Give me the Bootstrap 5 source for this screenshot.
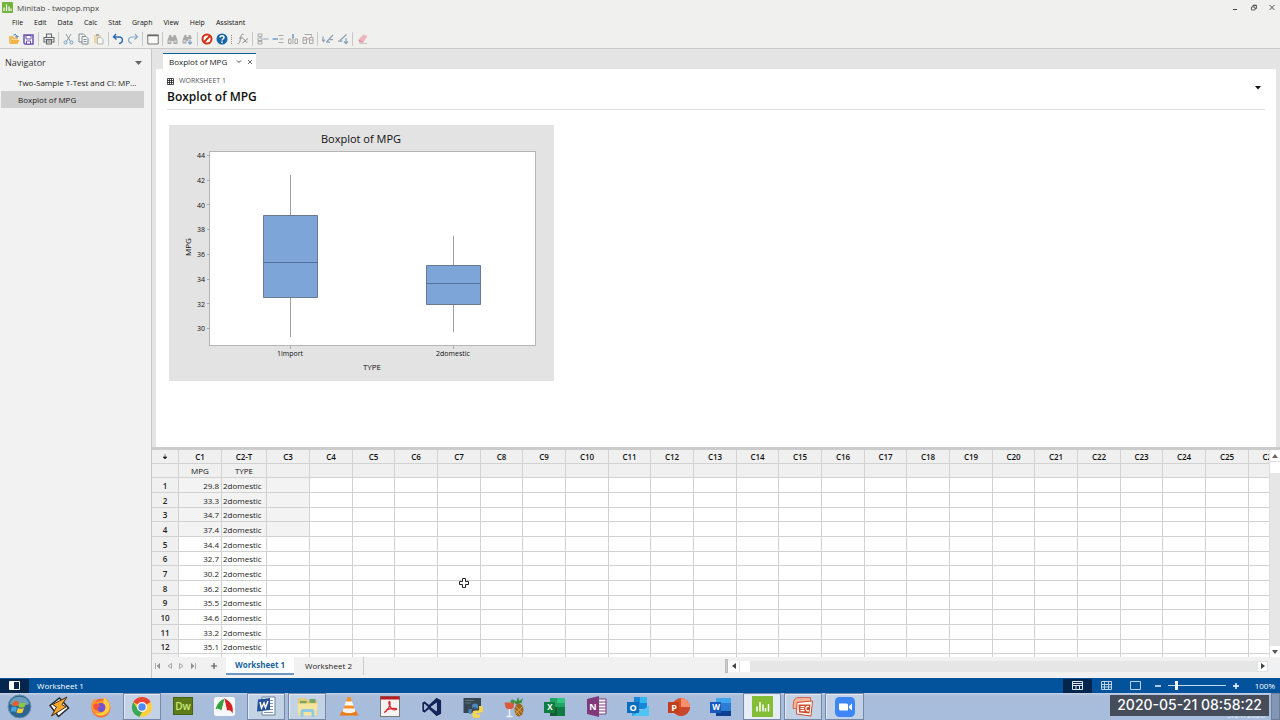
<!DOCTYPE html>
<html lang="en">
<head>
<meta charset="utf-8">
<meta name="viewport" content="width=device-width, initial-scale=1">
<title>Minitab - twopop.mpx</title>
<link href="https://cdn.jsdelivr.net/npm/bootstrap@5.3.0/dist/css/bootstrap.min.css" rel="stylesheet">
<style>
  body { font-family: "Open Sans", "Noto Sans", sans-serif; font-size: 8px; line-height: 12px; color: #1c1c1c; background: #f0f0ef; }
  button { background: none; border: 0; padding: 0; color: inherit; font: inherit; }
  a { color: inherit; text-decoration: none; }
  svg { display: block; }
  .titlebar { height: 15px; padding: 0 5px 0 2px; color: #444; }
  .winbtns { gap: 8px; padding-right: 0; margin-right: -2px; }
  .winbtns button { width: 10px; }
  .menus { height: 15px; padding-left: 12px; gap: 11px; font-size: 7px; color: #111; }
  .tools { height: 19px; padding-left: 6px; border-bottom: 1px solid #c9c9c9; }
  .tools button { width: 15px; display: flex; justify-content: center; }
  .tsep { width: 1px; height: 14px; margin: 0 2px; background: #c8c8c8; }
  .tsep.tight { margin: 0 1px 0 2px; }
  .dots { width: 2px; height: 9px; margin: 0 2px; border-left: 1px dotted #888; }
  .sidenav { width: 152px; background: #f2f2f2; border-right: 1px solid #c6c6c6; }
  .sidenav h2 { font-size: 9px; line-height: 12px; margin: 0; padding: 8px 9px 5px 5px; font-weight: 400; color: #333; }
  .sidenav .item { display: block; height: 17px; line-height: 17px; margin: 0 7px 0 1px; padding-left: 17px; color: #222; white-space: nowrap; }
  .sidenav .item.active { background: #cfcfcf; }
  .tabbar { height: 20px; background: #e4e4e4; padding-left: 11px; }
  .doctab { height: 16px; border-top: 1px solid #0a6398; background: #fff; padding: 0 3px 0 6px; gap: 5px; color: #222; }
  .output { background: #fff; border: solid #e4e4e4; border-width: 0 4px; padding: 6px 11px 0; height: 378px; }
  .output .src { font-size: 7px; gap: 5px; color: #555; }
  .output h1 { font-size: 12px; line-height: 16px; font-weight: 600; margin: 2px 0 0; color: #111; }
  .headrow { border-bottom: 1px solid #dedede; padding-bottom: 4px; }
  .plot { margin: 15px 0 0 2px; }
  .sheet { border-top: 3px solid #cbcbcb; height: 210px; }
  .gridwrap { overflow: hidden; background: #fff; }
  .cells { table-layout: fixed; width: 1121px; border-collapse: separate; border-spacing: 0; color: #222; }
  .cells th, .cells td { padding: 0 2px; border: solid #d2d2d2; border-width: 0 1px 1px 0; height: 15px; line-height: 13px; white-space: nowrap; overflow: hidden; font-weight: 400; }
  .cells thead th { text-align: center; background: #f0f0f0; color: #111; height: 14px; }
  .cells thead tr:first-child th { font-weight: 600; overflow: visible; }
  .cells tbody th { text-align: center; background: #f0f0f0; font-weight: 600; color: #222; }
  .cells tbody tr:nth-child(3n) > * { height: 14px; line-height: 13px; }
  .cells td:nth-child(2) { text-align: right; }
  .cells td:nth-child(3) { padding: 0 0 0 1px; }
  .cells .sel { background: #f3f3f3; }
  .c-row { width: 27px; } .c-a { width: 43px; } .c-b { width: 42px; } .c-text { width: 45px; }
  .vbar { width: 11px; background: #e6e6e6; border-left: 1px solid #ddd; }
  .vbar button, .thumb { background: #fff; width: 10px; height: 11px; display: flex; align-items: center; justify-content: center; }
  .thumb { border-top: 1px solid #ddd; height: 12px; }
  .sheettabs { height: 21px; padding-bottom: 3px; background: #f1f1f1; }
  .steps { gap: 7px; padding: 0 14px 0 3px; }
  .steps button { width: 5px; display: flex; justify-content: center; }
  .wtab { height: 18px; padding: 0 11px; }
  .wtab.active { background: #fff; color: #17639c; font-weight: 700; border-bottom: 2px solid #6d97c6; padding: 0 9px; }
  .wtab:last-child { border-right: 1px solid #ccc; }
  .hbar { width: 555px; height: 14px; padding-right: 12px; }
  .grip { width: 3px; height: 14px; background: #cfcfcf; border: 1px solid #bbb; }
  .track { background: #e6e6e6; height: 11px; }
  .hbar button { width: 11px; height: 11px; background: #fff; display: flex; align-items: center; justify-content: center; }
  .statusbar { height: 15px; background: #02539b; color: #fff; padding-right: 5px; }
  .sqbtn { width: 29px; height: 14px; background: #04264c; display: flex; align-items: center; justify-content: center; }
  .views { margin-right: 5px; }
  .views button { width: 29px; height: 14px; display: flex; align-items: center; justify-content: center; }
  .views button.on { background: #04264c; }
  .zoomer { width: 58px; height: 10px; appearance: none; background: transparent; margin: 0 7px; }
  .zoomer::-webkit-slider-runnable-track { height: 1px; background: #c5d9ec; }
  .zoomer::-webkit-slider-thumb { appearance: none; width: 3px; height: 9px; margin-top: -4px; background: #fff; }
  .taskbar { height: 27px; background: linear-gradient(#c3d1e6, #a9bddb 10%, #a8bddc); }
  .taskbar .app { width: 41px; padding: 0 2px 0 1px; height: 27px; display: flex; }
  .taskbar .app:nth-child(3n) { width: 42px; }
  .taskbar .app:first-child { width: 39px; }
  .taskbar .app span { flex: 1; height: 27px; display: flex; align-items: center; justify-content: center; border: 1px solid transparent; }
  .taskbar .open span { background: #c4d2e6; border-color: #7488a8; box-shadow: inset 1px 1px 0 #e0e9f4; }
  .taskbar .front span { background: #e6edf5; }
  .traydate { right: 15px; bottom: -1px; color: #e6edf6; }
  .stamp { right: 11px; top: 2px; height: 21px; padding: 0 7px; background: #3d4450ec; color: #fff; font: 500 14px/20px Inter, sans-serif; white-space: nowrap; }
  .showdesk { width: 9px; height: 27px; right: 0; top: 0; border: 1px solid #6f7f99; background: #8296b6; }
  .pointer { left: 458px; top: 577px; pointer-events: none; }
</style>
</head>
<body class="vh-100 overflow-hidden">
<div class="d-flex flex-column h-100">
  <header>
    <div class="titlebar d-flex align-items-center">
      <svg width="11" height="11" viewBox="0 0 22 22"><rect width="22" height="22" rx="2" fill="#72b33c"/><path d="M4 18v-7M9 18V5M14 18V9M18 18v-5" stroke="#fff" stroke-width="2.4"/></svg>
      <span class="ms-1">Minitab - twopop.mpx</span>
      <div class="winbtns d-flex ms-auto">
        <button aria-label="Minimize"><svg width="10" height="9" viewBox="0 0 10 9"><path d="M2 6.5h4" stroke="#444"/></svg></button>
        <button aria-label="Restore"><svg width="10" height="9" viewBox="0 0 10 9" fill="none" stroke="#444" stroke-width=".8"><path d="M2.500 4h3.500v3H2.500zM4 4V2.200h3.500V5.500H6M4 2.500h3.500"/></svg></button>
        <button aria-label="Close"><svg width="10" height="9" viewBox="0 0 10 9"><path d="M2.500 2l5 5M7.500 2l-5 5" stroke="#444" stroke-width=".9"/></svg></button>
      </div>
    </div>
    <nav class="menus d-flex align-items-center" aria-label="Menu">
      <a href="#">File</a><a href="#">Edit</a><a href="#">Data</a><a href="#">Calc</a><a href="#">Stat</a><a href="#">Graph</a><a href="#">View</a><a href="#">Help</a><a href="#">Assistant</a>
    </nav>
    <div class="tools d-flex align-items-center" role="toolbar">
      <button aria-label="Open"><svg width="12" height="12" viewBox="0 0 24 24"><path d="M2 21V6h8l2 3h8v4H7z" fill="#efbd5d"/><path d="M6 14h17l-4 8H3z" fill="#f2b447"/><path d="M11 4c4-2 7 0 7 4m-3-2 3 3 3-3" fill="none" stroke="#3474a8" stroke-width="2"/></svg></button>
      <button aria-label="Save"><svg width="11" height="11" viewBox="0 0 22 22"><path d="M2 2h18v18H4l-2-2z" fill="#fff" stroke="#6a4fae" stroke-width="3"/><path d="M6 3h10v7H6zM7 14h8v6H7z" fill="#fff" stroke="#6a4fae" stroke-width="2"/></svg></button>
      <i class="tsep"></i>
      <button aria-label="Print"><svg width="12" height="12" viewBox="0 0 24 24" fill="none" stroke="#63686c" stroke-width="2.200"><path d="M7 9V2h10v7M6 18H2V9h20v9h-4M7 14h10v8H7zM5 13h14M9 18h6"/></svg></button>
      <i class="tsep"></i>
      <button aria-label="Cut"><svg width="11" height="12" viewBox="0 0 22 24" fill="none" stroke-width="2"><path d="M6 2l9 15M16 2L7 17" stroke="#8d979f"/><circle cx="5" cy="19" r="3" stroke="#6c9cc6"/><circle cx="17" cy="19" r="3" stroke="#6c9cc6"/></svg></button>
      <button aria-label="Copy"><svg width="11" height="12" viewBox="0 0 22 24" fill="#f7f7f7" stroke="#7e8990" stroke-width="2"><path d="M2 2h9l3 3v13H2z"/><path d="M8 7h8l4 4v11H8zM11 13h6M11 17h6"/></svg></button>
      <button aria-label="Paste"><svg width="11" height="12" viewBox="0 0 22 24"><path d="M2 4h14v17H2z" fill="#edd6ab"/><path d="M6 2h6v4H6z" fill="#aaa"/><path d="M9 9h7l4 4v9H9z" fill="#f7f7f7" stroke="#b7b7b7" stroke-width="2"/></svg></button>
      <i class="tsep tight"></i>
      <button aria-label="Undo"><svg width="12" height="12" viewBox="0 0 24 24" fill="none" stroke="#2c6cb3" stroke-width="2.800"><path d="M8 2L3 8l6 5M3 8h11c9 0 9 12 0 13"/></svg></button>
      <button aria-label="Redo"><svg width="12" height="12" viewBox="0 0 24 24" fill="none" stroke="#86abc9" stroke-width="2.400"><path d="M16 2l5 6-6 5M21 8H10C1 8 1 20 10 21"/></svg></button>
      <i class="tsep"></i>
      <button aria-label="New window"><svg width="12" height="11" viewBox="0 0 24 22"><path d="M1.500 2h21v18h-21z" fill="#fafafa" stroke="#777" stroke-width="2"/><path d="M1 3h22" stroke="#666" stroke-width="3"/></svg></button>
      <i class="tsep"></i>
      <button aria-label="Find"><svg width="11" height="11" viewBox="0 0 22 22" fill="#a7a9ab"><path d="M5 2h4v4h4V2h4l4 10v8h-8v-6H9v6H1v-8z"/><path d="M3 13h4v4H3zM15 13h4v4h-4z" fill="#d9d9d9"/></svg></button>
      <button aria-label="Find next"><svg width="11" height="11" viewBox="0 0 22 22" fill="#a7a9ab"><path d="M5 2h4v4h4V2h4l3 8h-7v4H9v5H1v-7z"/><path d="M3 12h4v4H3z" fill="#d9d9d9"/><path d="M16 11v9m-4-4 4 4 4-4" fill="none" stroke="#7fa3c7" stroke-width="2.500"/></svg></button>
      <i class="tsep tight"></i>
      <button aria-label="Cancel"><svg width="12" height="12" viewBox="0 0 24 24"><circle cx="12" cy="12" r="9" fill="#fff" stroke="#cf3317" stroke-width="4"/><path d="M18 6L6 18" stroke="#cf3317" stroke-width="4"/></svg></button>
      <button aria-label="Help"><svg width="12" height="12" viewBox="0 0 24 24"><circle cx="12" cy="12" r="11" fill="#1665a8"/><path d="M8 9c0-5 8-5 8 0 0 3-4 3-4 6M12 17v3" fill="none" stroke="#fff" stroke-width="3"/></svg></button>
      <i class="dots"></i>
      <button aria-label="Formula"><svg width="12" height="12" viewBox="0 0 24 24" fill="none" stroke="#8b8b8b" stroke-width="2"><path d="M13 3c-4-2-5 2-6 8s-2 12-6 10M4 10h8M12 12c4-2 4 9 9 6M22 11l-11 9"/></svg></button>
      <i class="tsep"></i>
      <button aria-label="Insert cells"><svg width="12" height="12" viewBox="0 0 24 24" fill="none" stroke="#a9a9a9" stroke-width="2"><path d="M2 2h8v5H2zM2 10h8v5H2zM2 17h8v5H2z"/><path d="M12 12h11" stroke="#8ea8bf"/></svg></button>
      <button aria-label="Insert rows"><svg width="12" height="12" viewBox="0 0 24 24" fill="none" stroke="#a9a9a9" stroke-width="2"><path d="M13 5h10M13 19h10M15 12h8"/><path d="M1 12h11" stroke="#6fa0c9" stroke-width="3"/></svg></button>
      <button aria-label="Insert columns"><svg width="12" height="12" viewBox="0 0 24 24" fill="none" stroke="#a9a9a9" stroke-width="2"><path d="M3 12h5v9H3zM16 12h5v9h-5zM12 11v11"/><path d="M12 2v9" stroke="#7298b8" stroke-width="3"/></svg></button>
      <button aria-label="Move columns"><svg width="12" height="12" viewBox="0 0 24 24" fill="none" stroke="#a9a9a9" stroke-width="2"><path d="M2 9h7v12H2zM15 9h7v12h-7zM2 14h7M15 14h7M5 3h14v4"/><path d="M10 12h4" stroke="#d89a85"/></svg></button>
      <i class="tsep"></i>
      <button aria-label="Previous point"><svg width="12" height="12" viewBox="0 0 24 24" fill="none" stroke="#8ea2b4" stroke-width="2.500"><path d="M2 7v9M0 13l3 4 3-4M8 18h8M10 17L22 4M16 13h6"/></svg></button>
      <button aria-label="Next point"><svg width="12" height="12" viewBox="0 0 24 24" fill="none" stroke="#8ea2b4" stroke-width="2.500"><path d="M2 16h9M6 15L19 3M18 10v10M14 17l4 4 4-4"/></svg></button>
      <i class="tsep"></i>
      <button aria-label="Erase"><svg width="12" height="12" viewBox="0 0 24 24"><path d="M13 3l8 3-8 12H5l-3-4z" fill="#edb7bd"/><path d="M3 14l7 2 4 3H5z" fill="#d991a0"/><path d="M5 21h15" stroke="#c5c5c5" stroke-width="2"/></svg></button>
    </div>
  </header>

  <div class="d-flex flex-grow-1 overflow-hidden">
    <aside class="sidenav flex-shrink-0">
      <h2 class="d-flex align-items-center justify-content-between">Navigator <svg width="7" height="4" viewBox="0 0 7 4"><path d="M0 0h7L3.500 4z" fill="#666"/></svg></h2>
      <a href="#" class="item">Two-Sample T-Test and CI: MP...</a>
      <a href="#" class="item active" aria-current="page">Boxplot of MPG</a>
    </aside>

    <main class="d-flex flex-column flex-grow-1 overflow-hidden">
      <div class="tabbar d-flex align-items-end">
        <div class="doctab d-flex align-items-center">
          <span>Boxplot of MPG</span>
          <button class="ms-1" aria-label="Tab options"><svg width="6" height="6" viewBox="0 0 6 6"><path d="M1 1.500l2 2 2-2" fill="none" stroke="#444"/></svg></button>
          <button aria-label="Close tab"><svg width="6" height="6" viewBox="0 0 6 6"><path d="M1 1l4 4M5 1L1 5" stroke="#444" stroke-width=".8"/></svg></button>
        </div>
      </div>

      <section class="output flex-grow-1">
        <div class="headrow d-flex justify-content-between align-items-center">
          <div>
            <div class="src d-flex align-items-center"><svg width="7" height="7" viewBox="0 0 14 14" fill="none" stroke="#222" stroke-width="1.600"><path d="M1 1h12v12H1zM1 5h12M1 9h12M5 1v12M9 1v12"/></svg>WORKSHEET 1</div>
            <h1>Boxplot of MPG</h1>
          </div>
          <button class="me-1 pb-1" aria-label="Output options"><svg width="6" height="4" viewBox="0 0 6 4"><path d="M0 0h6L3 3.500z" fill="#111"/></svg></button>
        </div>
        <svg class="plot" width="385" height="256" viewBox="0 0 385 256" role="img" aria-label="Boxplot of MPG" font-family="Open Sans, Noto Sans, sans-serif" fill="#111">
          <rect width="385" height="256" fill="#e3e3e3"/>
          <rect x="40.500" y="26.500" width="326" height="194" fill="#fff" stroke="#b5b5b5"/>
          <text x="192" y="18" font-size="11" text-anchor="middle">Boxplot of MPG</text>
          <g font-size="7" text-anchor="end">
            <text x="36" y="33">44</text><text x="36" y="58">42</text><text x="36" y="83">40</text><text x="36" y="107">38</text>
            <text x="36" y="132">36</text><text x="36" y="157">34</text><text x="36" y="182">32</text><text x="36" y="206">30</text>
          </g>
          <path d="M38 30.500h3M38 55.500h3M38 79.500h3M38 104.500h3M38 129.500h3M38 154.500h3M38 178.500h3M38 203.500h3M121.500 221v3M284.500 221v3" stroke="#aaa"/>
          <path d="M121.500 50v162M284.500 111v96" stroke="#a0a0a0"/>
          <path d="M94.500 90.500h54v82h-54zM257.500 140.500h54v39h-54z" fill="#7da5d8" stroke="#6b7891"/>
          <path d="M94 137.500h55M257 158.500h55" stroke="#52719b"/>
          <g font-size="7" text-anchor="middle"><text x="121" y="231">1import</text><text x="284" y="231">2domestic</text></g>
          <text x="203" y="245" font-size="8" text-anchor="middle">TYPE</text>
          <text transform="translate(22 122) rotate(-90)" font-size="8" text-anchor="middle">MPG</text>
        </svg>
      </section>

      <section class="sheet d-flex flex-column flex-shrink-0" aria-label="Worksheet">
        <div class="d-flex flex-grow-1 overflow-hidden">
          <div class="gridwrap flex-grow-1"><table class="cells"><colgroup id="cols"></colgroup><thead id="head"></thead><tbody id="rows"></tbody></table></div>
          <div class="vbar flex-shrink-0 d-flex flex-column">
            <button aria-label="Scroll up"><svg width="6" height="4" viewBox="0 0 6 4"><path d="M0 4h6L3 0z" fill="#666"/></svg></button>
            <div class="thumb mb-auto"></div>
            <button aria-label="Scroll down"><svg width="6" height="4" viewBox="0 0 6 4"><path d="M0 0h6L3 4z" fill="#555"/></svg></button>
          </div>
        </div>
      </section>

      <div class="sheettabs d-flex align-items-center flex-shrink-0">
        <div class="steps d-flex align-items-center">
          <button aria-label="First"><svg width="5" height="6" viewBox="0 0 5 6"><path d="M.5 0v6M5 .5v5L2 3z" stroke="#777" stroke-width=".6" fill="#999"/></svg></button>
          <button aria-label="Previous"><svg width="5" height="6" viewBox="0 0 5 6"><path d="M4.500 .5v5L1 3z" stroke="#888" stroke-width=".7" fill="none"/></svg></button>
          <button aria-label="Next"><svg width="5" height="6" viewBox="0 0 5 6"><path d="M.5 .5v5L4 3z" stroke="#888" stroke-width=".7" fill="none"/></svg></button>
          <button aria-label="Last"><svg width="5" height="6" viewBox="0 0 5 6"><path d="M4.500 0v6M0 .5v5L3 3z" stroke="#777" stroke-width=".6" fill="#999"/></svg></button>
        </div>
        <button class="me-1" aria-label="Add worksheet"><svg width="8" height="6" viewBox="0 0 8 6"><path d="M1 3h6M4 0v6" stroke="#555" stroke-width="1.200"/></svg></button>
        <div class="d-flex align-items-center">
          <button class="wtab active ms-1">Worksheet 1</button>
          <button class="wtab">Worksheet 2</button>
        </div>
        <div class="hbar ms-auto d-flex align-items-center">
          <i class="grip"></i>
          <button aria-label="Scroll left"><svg width="4" height="6" viewBox="0 0 4 6"><path d="M4 0v6L0 3z" fill="#444"/></svg></button>
          <button class="border-start" aria-label="Scroll thumb"></button>
          <div class="track flex-grow-1"></div>
          <button class="border" aria-label="Scroll right"><svg width="4" height="6" viewBox="0 0 4 6"><path d="M0 0v6l4-3z" fill="#444"/></svg></button>
        </div>
      </div>
    </main>
  </div>

  <footer>
    <div class="statusbar d-flex align-items-center">
      <button class="sqbtn" aria-label="Toggle navigator"><svg width="11" height="9" viewBox="0 0 11 9"><path d="M.5 .5h10v8H.5z" fill="#04264c" stroke="#fff"/><path d="M1 1h4v7H1z" fill="#fff"/></svg></button>
      <span class="ms-2">Worksheet 1</span>
      <div class="views d-flex ms-auto">
        <button class="on" aria-label="Split view"><svg width="11" height="9" viewBox="0 0 11 9" fill="none" stroke="#dce6ef"><path d="M.5 .5h10v8H.5zM0 4.500h11M4 5v3M7.500 5v3M1 2.500h9"/></svg></button>
        <button aria-label="Worksheet view"><svg width="11" height="9" viewBox="0 0 11 9" fill="none" stroke="#bcd3e8"><path d="M.5 .5h10v8H.5zM0 3.500h11M0 6h11M3.500 0v9M7.500 0v9"/></svg></button>
        <button aria-label="Output view"><svg width="11" height="9" viewBox="0 0 11 9" fill="none" stroke="#bcd3e8"><path d="M.5 .5h10v8H.5z"/></svg></button>
      </div>
      <button aria-label="Zoom out"><svg width="6" height="6" viewBox="0 0 6 6"><path d="M0 3h6" stroke="#fff" stroke-width="1.400"/></svg></button>
      <input class="zoomer" type="range" min="0" max="100" value="13" aria-label="Zoom">
      <button aria-label="Zoom in"><svg width="6" height="6" viewBox="0 0 6 6"><path d="M0 3h6M3 0v6" stroke="#fff" stroke-width="1.400"/></svg></button>
      <span class="ms-3">100%</span>
    </div>

    <div class="taskbar position-relative d-flex">
      <button class="app" aria-label="Start"><span><svg width="25" height="25" viewBox="0 0 50 50"><circle cx="25" cy="25" r="23" fill="#2c658f" stroke="#7292af" stroke-width="2"/><path d="M5 20a21 21 0 0 1 40 0c-12 5-28 5-40 0z" fill="#6c9dbd"/><path d="M12 16c5-3 8-2 12 0l-3 9c-4-3-7-3-11 0z" fill="#e85e2b"/><path d="M26 17c4 2 8 2 12 0l-3 9c-4 2-8 2-12 0z" fill="#8dc641"/><path d="M9 27c4-3 7-2 11 0l-2 9c-4-2-7-2-11 0z" fill="#43a4e0"/><path d="M22 28c4 2 8 2 12 0l-3 9c-4 2-8 2-12 0z" fill="#f9ce38"/></svg></span></button>
      <button class="app" aria-label="Winamp"><span><svg width="22" height="22" viewBox="0 0 44 44"><path d="M4 19L23 4l18 20-20 17z" fill="#fff" stroke="#222" stroke-width="3"/><path d="M38 2L9 17l8 5-10 18 29-18-8-5z" fill="#f5a82c" stroke="#432d13" stroke-width="2"/></svg></span></button>
      <button class="app" aria-label="Firefox"><span><svg width="22" height="22" viewBox="0 0 44 44"><circle cx="22" cy="24" r="19" fill="#fb6a35"/><path d="M3 24C1 12 8 7 10 5l3 7 13-3 2-7c10 8 15 14 12 25-3 15-30 21-37-3z" fill="#fb9630"/><path d="M29 3c7 9 12 12 10 21-2 14-19 20-30 10 18 5 25-7 19-17-3-4-1-10 1-14z" fill="#ffce43"/><circle cx="22" cy="23" r="9" fill="#7351d1"/><path d="M7 17c7-5 12 0 15 4-6-1-9 4-4 8-10 1-13-6-11-12z" fill="#f3543d"/></svg></span></button>
      <button class="app open" aria-label="Chrome"><span><svg width="22" height="22" viewBox="0 0 44 44"><circle cx="22" cy="22" r="20" fill="#ffcf3f"/><path d="M22 22L4.700 12a20 20 0 0 1 34.600 0z" fill="#e84636"/><path d="M4.700 12L14 27l8 5-5 10A20 20 0 0 1 4.700 12z" fill="#38a856"/><circle cx="22" cy="22" r="10" fill="#fff"/><circle cx="22" cy="22" r="7.500" fill="#4c8bf5"/></svg></span></button>
      <button class="app" aria-label="Dreamweaver"><span><svg width="20" height="19" viewBox="0 0 20 19"><rect width="20" height="18" fill="#496112"/><rect x="1" y="1" width="18" height="16" fill="#5e7b1b"/><text x="10" y="13" text-anchor="middle" font-family="Open Sans, sans-serif" font-weight="600" font-size="10" fill="#cbed74">Dw</text></svg></span></button>
      <button class="app" aria-label="FastStone"><span><svg width="21" height="19" viewBox="0 0 42 38"><rect width="42" height="38" rx="5" fill="#f5f7f8"/><path d="M3 24Q8 7 22 3l-7 24c-3-3-8-4-12-3z" fill="#34a23d"/><path d="M20 3c14 5 20 16 17 30-2-6-6-8-11-6z" fill="#d52420"/><path d="M21 3l5 24c-4-3-8-2-11 0z" fill="#f4f4ef"/></svg></span></button>
      <button class="app open" aria-label="Word 2010"><span><svg width="20" height="21" viewBox="0 0 40 42"><path d="M12 2h26v36H12z" fill="#fff" stroke="#68809e" stroke-width="2"/><path d="M16 9h18M16 15h18M16 21h18M16 27h18M16 33h18" stroke="#8195b2" stroke-width="2"/><path d="M4 7l24-3v24L2 31z" fill="#254f94"/><path d="M8 12l3 12 5-10 3 9 5-13" fill="none" stroke="#fff" stroke-width="3"/></svg></span></button>
      <button class="app open" aria-label="Explorer"><span><svg width="23" height="22" viewBox="0 0 46 44"><path d="M4 5h16l3 4h19v29H4z" fill="#e7c96c"/><path d="M8 10h13v5H8zM27 6h12v8H27z" fill="#75a56a"/><path d="M3 15h40l-2 24H5z" fill="#f5e49d"/><path d="M9 42V32q0-6 6-6h16q6 0 6 6v10h-6V32H15v10z" fill="#90cbe2"/></svg></span></button>
      <button class="app" aria-label="VLC"><span><svg width="20" height="21" viewBox="0 0 40 42"><path d="M7 28h26l6 11H1z" fill="#ed7b16"/><path d="M17 2h6l9 29c-5 5-19 5-24 0z" fill="#f68f24"/><path d="M14 11h12l3 8H11z" fill="#fff"/><path d="M9 25h22l2 6c-8 4-18 4-26 0z" fill="#f4f4f4"/></svg></span></button>
      <button class="app" aria-label="Acrobat"><span><svg width="20" height="21" viewBox="0 0 40 42"><rect x="1" y="1" width="38" height="40" fill="#f5f2f2" stroke="#777" stroke-width="2"/><path d="M1 1h38v6H1z" fill="#b91b20"/><path d="M8 33c6-2 14-14 12-21-2-3-4 1 0 8 3 7 8 9 13 7 2-3-9-4-21 1" fill="none" stroke="#d4282e" stroke-width="2.500"/></svg></span></button>
      <button class="app" aria-label="Visual Studio"><span><svg width="21" height="20" viewBox="0 0 42 40"><path d="M31 1l10 5v28l-10 5-15-14-9 7-5-3V11l5-3 9 7zM7 14v12l6-6zm24-2L20 20l11 8z" fill="#11265a" fill-rule="evenodd" stroke="#e9eef5" stroke-width="1"/></svg></span></button>
      <button class="app" aria-label="Python"><span><svg width="22" height="22" viewBox="0 0 44 44"><path d="M3 4h35v30H3z" fill="#364653"/><path d="M6 9h18M6 14h12" stroke="#61727d" stroke-width="2"/><path d="M16 31v-6q0-5 6-5h7v-6q0-4-5-4h-2q-5 0-5 5v3h8v3H14q-6 0-4 7 1 4 6 3z" transform="translate(3 5)" fill="#4d87bc"/><path d="M34 20h4q5 0 4 9-1 5-7 5h-7v3h8v3q0 4-7 4-9 0-8-7v-4q0-4 6-4h6q2 0 1-9z" fill="#f8d84b"/></svg></span></button>
      <button class="app" aria-label="Cocktail"><span><svg width="22" height="22" viewBox="0 0 44 44"><path d="M26 17l-6-9 7 3 3-9 3 8 7-6-3 10z" fill="#3b8c35"/><ellipse cx="32" cy="28" rx="9" ry="13" fill="#9d6424"/><path d="M25 20l14 14M24 27l11 12M39 21L25 36" stroke="#e0ab42" stroke-width="2"/><path d="M3 13h20l-2 10q-7 8-16 0z" fill="#dc573f"/><path d="M13 26v14M7 41h12" stroke="#eef3f5" stroke-width="3"/><circle cx="19" cy="11" r="4" fill="#3d9744"/></svg></span></button>
      <button class="app" aria-label="Excel"><span><svg width="22" height="20" viewBox="0 0 22 20"><path d="M6 1h15v18H6z" fill="#21a366"/><path d="M6 10h7v9H6z" fill="#185c37"/><path d="M13 10h8v9h-8z" fill="#107c41"/><path d="M13 1h8v5h-8z" fill="#33c481"/><path d="M0 5h11v11H0z" fill="#107c41"/><text x="6" y="13" text-anchor="middle" font-size="8" font-weight="700" fill="#fff">X</text></svg></span></button>
      <button class="app" aria-label="OneNote"><span><svg width="22" height="21" viewBox="0 0 22 21"><path d="M10 3h10v15H10z" fill="#fff" stroke="#80397b"/><path d="M13 6h7M13 9h7M13 12h7M13 15h7" stroke="#80397b"/><path d="M1 3l12-3v21L1 18z" fill="#80397b"/><text x="7" y="14" text-anchor="middle" font-size="9" font-weight="700" fill="#fff">N</text></svg></span></button>
      <button class="app" aria-label="Outlook"><span><svg width="22" height="20" viewBox="0 0 22 20"><path d="M7 0h13v12H7z" fill="#1688d8"/><path d="M13 0h7v6h-7z" fill="#35b8f1"/><path d="M5 9l9 5 8-5v10H5z" fill="#2aa1e5"/><path d="M5 19l17-10v10z" fill="#50c5f4"/><path d="M0 5h12v11H0z" fill="#0f6cbd"/><text x="6" y="14" text-anchor="middle" font-size="9" font-weight="700" fill="#fff">O</text></svg></span></button>
      <button class="app" aria-label="PowerPoint"><span><svg width="22" height="20" viewBox="0 0 22 20"><circle cx="13" cy="10" r="9" fill="#d35230"/><path d="M13 1a9 9 0 0 1 9 9h-9z" fill="#ff8f6b"/><path d="M4 10h18a9 9 0 0 1-18 0z" fill="#c9472b"/><path d="M0 5h11v11H0z" fill="#c43e1c"/><text x="6" y="14" text-anchor="middle" font-size="9" font-weight="700" fill="#fff">P</text></svg></span></button>
      <button class="app" aria-label="Word"><span><svg width="22" height="20" viewBox="0 0 22 20"><path d="M6 1h15v18H6z" fill="#2b7cd3"/><path d="M6 1h15v5H6z" fill="#41a5ee"/><path d="M6 14h15v5H6z" fill="#103f91"/><path d="M0 5h11v11H0z" fill="#185abd"/><text x="6" y="13" text-anchor="middle" font-size="8" font-weight="700" fill="#fff">W</text></svg></span></button>
      <button class="app open front" aria-label="Minitab"><span><svg width="21" height="21" viewBox="0 0 42 42"><path d="M0 0h42v42H0z" fill="#84bd36"/><path d="M10 31V21M16 31V12M22 31V17M27 31v-7M33 31V16" stroke="#fff" stroke-width="3"/></svg></span></button>
      <button class="app open" aria-label="PowerPoint Show"><span><svg width="22" height="22" viewBox="0 0 44 44"><path d="M3 12q2-9 11-9h23v22H2z" fill="#f4b49d" stroke="#d7674a" stroke-width="2"/><path d="M10 13l31-3-3 30-29-4z" fill="#fff" stroke="#cc4c2c" stroke-width="2"/><path d="M13 17h24l-2 18-21-2z" fill="#ce4a29"/><path d="M17 21h8M17 25h7M17 29h8M34 21q-8-1-6 6 3 5 6 2" stroke="#fff" stroke-width="2.500" fill="none"/></svg></span></button>
      <button class="app open" aria-label="Zoom"><span><svg width="20" height="20" viewBox="0 0 40 40"><rect width="40" height="40" rx="9" fill="#3e86f5"/><path d="M8 13h15q3 0 3 3v11H11q-3 0-3-3zM28 18l6-5v14l-6-5z" fill="#fff"/></svg></span></button>
      <span class="traydate position-absolute">5/21/2020</span>
      <time class="stamp position-absolute">2020-05-21 08:58:22</time>
      <i class="showdesk position-absolute"></i>
    </div>
  </footer>
</div>
<svg class="pointer position-absolute" width="12" height="12" viewBox="0 0 12 12"><path d="M4.500 1.500h3v3h3v3h-3v3h-3v-3h-3v-3h3z" fill="#fff" stroke="#222"/></svg>
<script>
  const mpg = ['29.8','33.3','34.7','37.4','34.4','32.7','30.2','36.2','35.5','34.6','33.2','35.1'];
  const count = 26;
  let cols = '<col class="c-row">', names = '<th scope="col" aria-label="Direction"><svg class="mx-auto" width="4" height="6" viewBox="0 0 6 8"><path d="M3 0v5M0 4h6L3 7z" stroke="#222" fill="#222"/></svg></th>', labels = '<th></th>';
  for (let c = 1; c <= count; c++) {
    cols += `<col class="${c === 2 ? 'c-text' : c > 3 && c % 3 === 2 ? 'c-b' : 'c-a'}">`;
    names += `<th scope="col">C${c}${c === 2 ? '-T' : ''}</th>`;
    labels += `<th>${c === 1 ? 'MPG' : c === 2 ? 'TYPE' : ''}</th>`;
  }
  document.getElementById('cols').innerHTML = cols;
  document.getElementById('head').innerHTML = `<tr>${names}</tr><tr>${labels}</tr>`;
  document.getElementById('rows').innerHTML = [...mpg, ''].map((v, r) => {
    let cells = `<th scope="row">${v ? r + 1 : ''}</th>`;
    for (let c = 1; c <= count; c++) cells += `<td${c < 4 && r < 4 ? ' class="sel"' : ''}>${c === 1 ? v : c === 2 && v ? '2domestic' : ''}</td>`;
    return `<tr>${cells}</tr>`;
  }).join('');
</script>
<script src="https://cdn.jsdelivr.net/npm/bootstrap@5.3.0/dist/js/bootstrap.bundle.min.js"></script>
</body>
</html>
